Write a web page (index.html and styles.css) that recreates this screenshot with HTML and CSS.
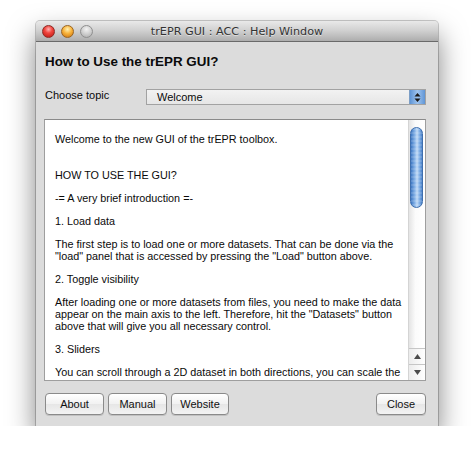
FILE: index.html
```html
<!DOCTYPE html>
<html lang="en">
<head>
<meta charset="utf-8">
<title>trEPR GUI : ACC : Help Window</title>
<link rel="stylesheet" href="styles.css">
</head>
<body>
<div class="stage">
  <div class="window">
    <div class="titlebar">
      <div class="lights">
        <span class="light red"></span>
        <span class="light orange"></span>
        <span class="light gray"></span>
      </div>
      <div class="title">trEPR GUI : ACC : Help Window</div>
      <div></div>
    </div>
    <div class="body">
      <h1 class="heading">How to Use the trEPR GUI?</h1>
      <div class="topic-row">
        <label class="topic-label">Choose topic</label>
        <div class="popup">
          <span class="popup-value">Welcome</span>
          <span class="popup-stepper">
            <svg width="7" height="11" viewBox="0 0 7 11"><path d="M3.5 1 L6.5 4.5 L0.5 4.5 Z M3.5 10 L6.5 6.5 L0.5 6.5 Z" fill="#1a1a1a"/></svg>
          </span>
        </div>
      </div>
      <div class="textbox">
        <div class="text">
          <p class="intro">Welcome to the new GUI of the trEPR toolbox.</p>
          <p>HOW TO USE THE GUI?</p>
          <p>-= A very brief introduction =-</p>
          <p>1. Load data</p>
          <p>The first step is to load one or more datasets. That can be done via the "load" panel that is accessed by pressing the "Load" button above.</p>
          <p>2. Toggle visibility</p>
          <p>After loading one or more datasets from files, you need to make the data appear on the main axis to the left. Therefore, hit the "Datasets" button above that will give you all necessary control.</p>
          <p>3. Sliders</p>
          <p>You can scroll through a 2D dataset in both directions, you can scale the</p>
        </div>
        <div class="scrollbar">
          <div class="track"><div class="thumb"></div></div>
          <div class="arrow arrow-up">
            <svg width="7" height="5" viewBox="0 0 7 5"><path d="M3.5 0 L7 5 L0 5 Z" fill="#4a4a4a"/></svg>
          </div>
          <div class="arrow arrow-down">
            <svg width="7" height="5" viewBox="0 0 7 5"><path d="M0 0 L7 0 L3.5 5 Z" fill="#4a4a4a"/></svg>
          </div>
        </div>
      </div>
      <div class="buttons">
        <div class="btn-group">
          <button class="btn btn-about">About</button>
          <button class="btn btn-manual">Manual</button>
          <button class="btn btn-website">Website</button>
        </div>
        <button class="btn btn-close">Close</button>
      </div>
    </div>
  </div>
</div>
</body>
</html>
```

FILE: styles.css
```css
html, body {
  margin: 0;
  padding: 0;
  background: #ffffff;
}

.stage {
  padding: 21px 0 0 36px;
}

.window {
  width: 402px;
  height: 405px;
  display: flex;
  flex-direction: column;
  background: #dcdcdc;
  border-radius: 4px 4px 0 0;
  box-shadow: 0 14px 28px rgba(0, 0, 0, 0.5), 0 0 0 1px rgba(0, 0, 0, 0.2);
  font-family: "Liberation Sans", Arial, sans-serif;
  color: #0a0a0a;
}

.titlebar {
  height: 21px;
  box-sizing: border-box;
  display: grid;
  grid-template-columns: 1fr auto 1fr;
  align-items: center;
  padding: 0 6px;
  background: linear-gradient(#e9e9e9, #cfcfcf 50%, #adadad);
  border-bottom: 1px solid #6a6a6a;
  border-radius: 4px 4px 0 0;
}

.lights {
  display: flex;
  gap: 6px;
  align-items: center;
}

.light {
  width: 13px;
  height: 13px;
  border-radius: 50%;
  box-sizing: border-box;
}

.light.red {
  background: radial-gradient(circle at 50% 30%, #ffb3b3 0, #f1463f 40%, #b8140e 100%);
  border: 1px solid #8e2a25;
}

.light.orange {
  background: radial-gradient(circle at 50% 30%, #fff1b3 0, #f8b33b 45%, #c86f0c 100%);
  border: 1px solid #9a6420;
}

.light.gray {
  background: radial-gradient(circle at 50% 30%, #f3f3f3 0, #cfcfcf 50%, #a9a9a9 100%);
  border: 1px solid #8f8f8f;
}

.title {
  font-family: "DejaVu Sans", sans-serif;
  font-size: 11.2px;
  color: #333;
  white-space: nowrap;
  text-shadow: 0 1px 0 rgba(255, 255, 255, 0.5);
}

.body {
  flex: 1;
  display: flex;
  flex-direction: column;
  padding: 0 12px 11px 8px;
}

.heading {
  margin: 12px 0 0 1px;
  font-size: 13.4px;
  line-height: 16px;
  font-weight: bold;
}

.topic-row {
  margin-top: 19px;
  display: flex;
  align-items: center;
  height: 16px;
}

.topic-label {
  width: 101px;
  margin-left: 1px;
  font-size: 11px;
  position: relative;
  top: -2px;
}

.popup {
  flex: 1;
  height: 16px;
  box-sizing: border-box;
  display: flex;
  align-items: center;
  border: 1px solid #a2a2a2;
  background: linear-gradient(#f2f2f2, #e6e6e6);
  padding-left: 10px;
}

.popup-value {
  flex: 1;
  font-size: 11px;
}

.popup-stepper {
  width: 15px;
  height: 14px;
  display: flex;
  align-items: center;
  justify-content: center;
  background: linear-gradient(to right, #5f95d6, #9ec3ee 50%, #5f95d6);
  border-left: 1px solid #7c9ec6;
}

.textbox {
  margin-top: 14px;
  height: 262px;
  box-sizing: border-box;
  display: flex;
  border: 1px solid #9e9e9e;
  border-top-color: #8a8a8a;
  background: #fff;
}

.text {
  flex: 1;
  overflow: hidden;
  padding: 13px 4px 0 10px;
  font-size: 10.8px;
  line-height: 12px;
}

.text p {
  margin: 0 0 11px;
}

.text p.intro {
  margin-bottom: 24px;
}

.scrollbar {
  width: 16px;
  display: flex;
  flex-direction: column;
  border-left: 1px solid #d4d4d4;
  background: linear-gradient(to right, #e4e4e4, #fbfbfb 40%, #ffffff);
}

.track {
  flex: 1;
  padding: 7px 0 0 1px;
}

.thumb {
  width: 13px;
  height: 81px;
  box-sizing: border-box;
  border-radius: 7px;
  border: 1px solid #3f6fae;
  background:
    repeating-linear-gradient(rgba(255, 255, 255, 0.12) 0 2px, rgba(0, 0, 0, 0) 2px 4px),
    linear-gradient(to right, #3e78c3, #86b3e8 35%, #c0dAf6 55%, #86b3e8 75%, #4a82c9);
}

.arrow {
  height: 15px;
  display: flex;
  align-items: center;
  justify-content: center;
  border-top: 1px solid #c6c6c6;
  background: linear-gradient(to right, #ececec, #ffffff);
}

.buttons {
  margin-top: 12px;
  display: flex;
  justify-content: space-between;
}

.btn-group {
  display: flex;
  gap: 4px;
  margin-left: 1px;
}

.btn {
  height: 22px;
  box-sizing: border-box;
  padding: 0;
  border: 1px solid #8a8a8a;
  border-radius: 4px;
  background: linear-gradient(#ffffff, #f1f1f1 50%, #e6e6e6 51%, #f3f3f3);
  font-family: "Liberation Sans", Arial, sans-serif;
  font-size: 11px;
  color: #111;
  box-shadow: 0 1px 0 rgba(0, 0, 0, 0.12);
}

.btn-about { width: 59px; }
.btn-manual { width: 59px; }
.btn-website { width: 58px; }
.btn-close { width: 50px; }
```
